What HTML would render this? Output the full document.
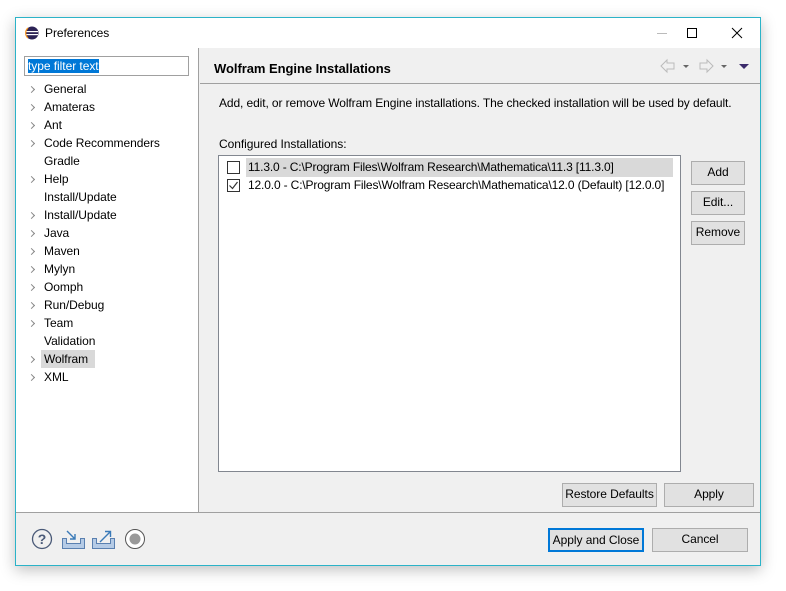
<!DOCTYPE html>
<html><head><style>
*{box-sizing:border-box;margin:0;padding:0}
body{width:786px;height:591px;background:#fff;position:relative;font-family:"Liberation Sans",sans-serif;font-size:12px;color:#000;overflow:hidden;letter-spacing:-0.05px}
.win{position:absolute;left:15px;top:17px;width:746px;height:549px;border:1px solid #2bb3c8;background:#f0f0f0;box-shadow:0 4px 14px rgba(0,0,0,.25)}
.a{position:absolute}
.title{left:0;top:0;width:744px;height:30px;background:#fff}
.left{left:0;top:30px;width:183px;height:465px;background:#fff;border-right:1px solid #a0a0a0}
.ti{position:absolute;left:28px;font-size:12px;line-height:16px}
.chev{position:absolute;left:13px;width:5px;height:5px;border-right:1.5px solid #888;border-top:1.5px solid #888;transform:rotate(45deg)}
.btn{position:absolute;background:#e1e1e1;border:1px solid #adadad;text-align:center;line-height:21px;font-size:12px}
</style></head><body>
<div class="win">
 <div class="a title">
  <svg class="a" style="left:9px;top:8px" width="14" height="14"><circle cx="7" cy="7" r="6.5" fill="#2c2255"/><rect x="1" y="5" width="12" height="1.2" fill="#fff"/><rect x="1" y="8" width="12" height="1.2" fill="#fff"/><path d="M3 2 A6.5 6.5 0 0 0 3 12" stroke="#f7941d" stroke-width="1.2" fill="none"/></svg>
  <div class="a" style="left:29px;top:8px;font-size:12px">Preferences</div>
  <div class="a" style="left:641px;top:15px;width:10px;height:1px;background:#bbb"></div>
  <div class="a" style="left:671px;top:10px;width:10px;height:10px;border:1px solid #000"></div>
  <svg class="a" style="left:715px;top:9px" width="12" height="12"><path d="M1 1L11 11M11 1L1 11" stroke="#000" stroke-width="1"/></svg>
 </div>
 <div class="a left">
  <div class="a" style="left:8px;top:8px;width:165px;height:20px;border:1px solid #a0a0a0;background:#fff"><span style="position:absolute;left:3px;top:2px;background:#0078d7;color:#fff;line-height:14px">type filter text</span></div>
  <div class="chev" style="top:39px"></div><div class="ti" style="top:33px">General</div>
  <div class="chev" style="top:57px"></div><div class="ti" style="top:51px">Amateras</div>
  <div class="chev" style="top:75px"></div><div class="ti" style="top:69px">Ant</div>
  <div class="chev" style="top:93px"></div><div class="ti" style="top:87px">Code Recommenders</div>
  <div class="ti" style="top:105px">Gradle</div>
  <div class="chev" style="top:129px"></div><div class="ti" style="top:123px">Help</div>
  <div class="ti" style="top:141px">Install/Update</div>
  <div class="chev" style="top:165px"></div><div class="ti" style="top:159px">Install/Update</div>
  <div class="chev" style="top:183px"></div><div class="ti" style="top:177px">Java</div>
  <div class="chev" style="top:201px"></div><div class="ti" style="top:195px">Maven</div>
  <div class="chev" style="top:219px"></div><div class="ti" style="top:213px">Mylyn</div>
  <div class="chev" style="top:237px"></div><div class="ti" style="top:231px">Oomph</div>
  <div class="chev" style="top:255px"></div><div class="ti" style="top:249px">Run/Debug</div>
  <div class="chev" style="top:273px"></div><div class="ti" style="top:267px">Team</div>
  <div class="ti" style="top:285px">Validation</div>
  <div class="a" style="left:25px;top:302px;width:54px;height:18px;background:#d9d9d9"></div>
  <div class="chev" style="top:309px"></div><div class="ti" style="top:303px">Wolfram</div>
  <div class="chev" style="top:327px"></div><div class="ti" style="top:321px">XML</div>
 </div>
 <div class="a" style="left:198px;top:43px;font-weight:bold;font-size:13px">Wolfram Engine Installations</div>
 <svg class="a" style="left:643px;top:40px" width="95" height="16">
  <path d="M2 8L8 2V5H15V11H8V14Z" fill="none" stroke="#bbb"/>
  <path d="M24 7h6l-3 3z" fill="#666"/>
  <path d="M54 8L48 2V5H41V11H48V14Z" fill="none" stroke="#bbb"/>
  <path d="M62 7h6l-3 3z" fill="#666"/>
  <path d="M80 6h10l-5 5z" fill="#3b2a6b"/>
 </svg>
 <div class="a" style="left:184px;top:65px;width:560px;height:1px;background:#a0a0a0"></div>
 <div class="a" style="left:203px;top:78px;letter-spacing:-0.1px">Add, edit, or remove Wolfram Engine installations. The checked installation will be used by default.</div>
 <div class="a" style="left:203px;top:119px">Configured Installations:</div>
 <div class="a" style="left:202px;top:137px;width:463px;height:317px;background:#fff;border:1px solid #828790">
  <div class="a" style="left:27px;top:2px;width:427px;height:19px;background:#d9d9d9"></div>
  <div class="a" style="left:8px;top:5px;width:13px;height:13px;border:1px solid #333;background:#fff"></div>
  <div class="a" style="left:29px;top:4px;letter-spacing:-0.15px">11.3.0 - C:\Program Files\Wolfram Research\Mathematica\11.3 [11.3.0]</div>
  <div class="a" style="left:8px;top:23px;width:13px;height:13px;border:1px solid #333;background:#fff"></div>
  <svg class="a" style="left:9px;top:24px" width="11" height="11"><path d="M1.5 5.5L4.5 8.5L9.5 2" stroke="#333" fill="none" stroke-width="1.2"/></svg>
  <div class="a" style="left:29px;top:22px;letter-spacing:-0.15px">12.0.0 - C:\Program Files\Wolfram Research\Mathematica\12.0 (Default) [12.0.0]</div>
 </div>
 <div class="btn" style="left:675px;top:143px;width:54px;height:24px">Add</div>
 <div class="btn" style="left:675px;top:173px;width:54px;height:24px">Edit...</div>
 <div class="btn" style="left:675px;top:203px;width:54px;height:24px">Remove</div>
 <div class="btn" style="left:546px;top:465px;width:95px;height:24px">Restore Defaults</div>
 <div class="btn" style="left:648px;top:465px;width:90px;height:24px">Apply</div>
 <div class="a" style="left:0;top:494px;width:744px;height:1px;background:#a0a0a0"></div>
 <svg class="a" style="left:15px;top:508px" width="140" height="26">
  <circle cx="11" cy="13" r="9.5" fill="none" stroke="#4a5a78" stroke-width="1.3"/>
  <text x="11" y="18" font-size="14" font-weight="bold" text-anchor="middle" fill="#4a5a78" font-family="Liberation Sans">?</text>
  <path d="M31.5 12.5V22.5H53.5V12.5H49.5V17.5H35.5V12.5Z" fill="#b5cbe6" stroke="#5a80b0"/>
  <path d="M36 5L44 13M44 8V13H39" stroke="#3a7ab8" fill="none" stroke-width="1.4"/>
  <path d="M61.5 12.5V22.5H83.5V12.5H79.5V17.5H65.5V12.5Z" fill="#b5cbe6" stroke="#5a80b0"/>
  <path d="M69 16L79 6M74 5.5H79.5V11" stroke="#3a7ab8" fill="none" stroke-width="1.4"/>
  <circle cx="104" cy="13" r="9.5" fill="#fff" stroke="#555" stroke-width="1"/>
  <circle cx="104" cy="13" r="5.5" fill="#999"/>
 </svg>
 <div class="btn" style="left:532px;top:510px;width:96px;height:24px;border:2px solid #0078d7;line-height:20px">Apply and Close</div>
 <div class="btn" style="left:636px;top:510px;width:96px;height:24px">Cancel</div>
</div>
</body></html>
